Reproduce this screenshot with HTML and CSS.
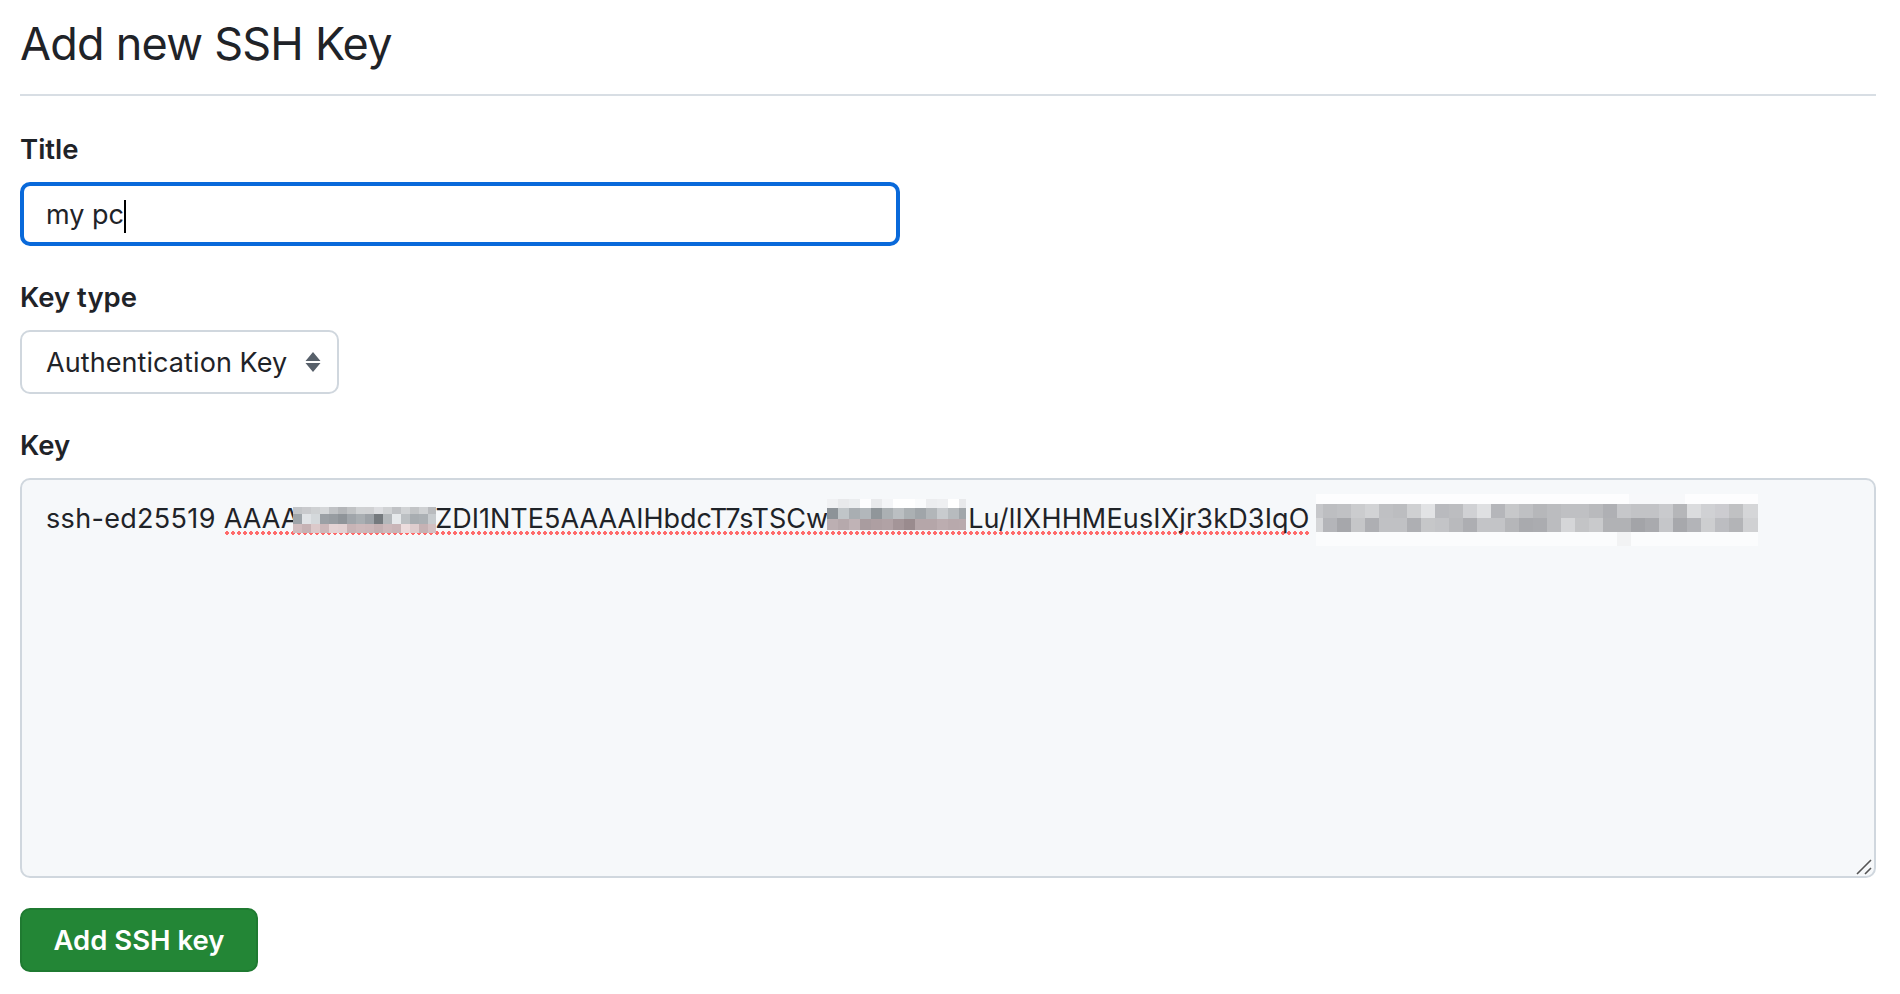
FILE: index.html
```html
<!DOCTYPE html>
<html lang="en">
<head>
  <meta charset="UTF-8" />
  <meta name="viewport" content="width=device-width, initial-scale=1">
  <title>Add new SSH Key</title>
  <link rel="stylesheet" href="styles.css">
</head>
<body>

  <h1>Add new SSH Key</h1>

  <form class="key-form">
    <div class="field">
      <label>Title</label>
      <div class="input focused">my pc<span class="caret"></span></div>
    </div>

    <div class="field">
      <label>Key type</label>
      <div class="select">
        Authentication Key
        <svg class="arrows" width="16" height="20" viewBox="0 0 16 20"><path d="M8 0l7.5 9H.5zM8 20L.5 11h15z"/></svg>
      </div>
    </div>

    <div class="field">
      <label>Key</label>
      <div class="textarea">
        <p class="key-text"><span class="key-prefix">ssh-ed25519 </span><span class="misspelled">AAAA<span class="gap gap-a">C3NzaC1l</span>ZDI1NTE5AAAAIHbdcT7sTSCw<span class="gap gap-b"></span><span class="key-tail">Lu/lIXHHMEusIXjr3kD3IqO</span></span></p>

        <!-- pixelated parts of the key -->
        <svg class="blur blur-a" width="143" height="26" viewBox="0 0 143 26" shape-rendering="crispEdges">
          <g>
            <rect x="0" width="9" height="7" fill="#c3c5c8"/><rect x="9" width="9" height="7" fill="#c9cacd"/><rect x="18" width="9" height="7" fill="#cfd1d3"/><rect x="27" width="9" height="7" fill="#d5d7d9"/><rect x="36" width="9" height="7" fill="#c0c2c5"/><rect x="45" width="9" height="7" fill="#b4b6b9"/><rect x="54" width="9" height="7" fill="#c1c3c5"/><rect x="63" width="9" height="7" fill="#d0d2d4"/><rect x="72" width="9" height="7" fill="#d0d1d3"/><rect x="81" width="9" height="7" fill="#dcdde0"/><rect x="90" width="9" height="7" fill="#d0d2d4"/><rect x="99" width="9" height="7" fill="#c0c2c5"/><rect x="108" width="9" height="7" fill="#d1d3d5"/><rect x="117" width="9" height="7" fill="#c2c4c6"/><rect x="126" width="9" height="7" fill="#cfd1d3"/><rect x="135" width="8" height="7" fill="#b9bbbe"/>
          </g>
          <g transform="translate(0 7)">
            <rect x="0" width="9" height="10" fill="#9ea4a9"/><rect x="9" width="9" height="10" fill="#e0e3e6"/><rect x="18" width="9" height="10" fill="#d4d8db"/><rect x="27" width="9" height="10" fill="#9ba0a5"/><rect x="36" width="9" height="10" fill="#979ca1"/><rect x="45" width="9" height="10" fill="#8f9499"/><rect x="54" width="9" height="10" fill="#a0a5aa"/><rect x="63" width="9" height="10" fill="#a9aeb2"/><rect x="72" width="9" height="10" fill="#9da2a7"/><rect x="81" width="9" height="10" fill="#757a7e"/><rect x="90" width="9" height="10" fill="#b4b8bb"/><rect x="99" width="9" height="10" fill="#e6e9eb"/><rect x="108" width="9" height="10" fill="#bcc0c3"/><rect x="117" width="9" height="10" fill="#a8adb1"/><rect x="126" width="9" height="10" fill="#abb0b4"/><rect x="135" width="8" height="10" fill="#c7cbce"/>
          </g>
          <g transform="translate(0 17)">
            <rect x="0" width="9" height="9" fill="#d0bcbe"/><rect x="9" width="9" height="9" fill="#c6b2b4"/><rect x="18" width="9" height="9" fill="#dcc9ca"/><rect x="27" width="9" height="9" fill="#ccb8ba"/><rect x="36" width="9" height="9" fill="#e4d3d4"/><rect x="45" width="9" height="9" fill="#e2d1d2"/><rect x="54" width="9" height="9" fill="#c8b4b6"/><rect x="63" width="9" height="9" fill="#cdb9bb"/><rect x="72" width="9" height="9" fill="#cbb7b9"/><rect x="81" width="9" height="9" fill="#c4b0b2"/><rect x="90" width="9" height="9" fill="#cdb9bb"/><rect x="99" width="9" height="9" fill="#c9b5b7"/><rect x="108" width="9" height="9" fill="#ecdcdd"/><rect x="117" width="9" height="9" fill="#dfcdce"/><rect x="126" width="9" height="9" fill="#c6b2b4"/><rect x="135" width="8" height="9" fill="#d3c0c2"/>
          </g>
        </svg>

        <svg class="blur blur-b" width="139" height="31" viewBox="0 0 139 31" shape-rendering="crispEdges">
          <g>
            <rect x="0" width="11" height="9" fill="#f0f1f3"/><rect x="11" width="11" height="9" fill="#e8e9eb"/><rect x="22" width="11" height="9" fill="#ebedef"/><rect x="33" width="11" height="9" fill="#fdfdfe"/><rect x="44" width="11" height="9" fill="#e9eaec"/><rect x="55" width="11" height="9" fill="#f4f5f7"/><rect x="66" width="11" height="9" fill="#ffffff"/><rect x="77" width="11" height="9" fill="#ffffff"/><rect x="88" width="11" height="9" fill="#fafbfc"/><rect x="99" width="11" height="9" fill="#ecedef"/><rect x="110" width="11" height="9" fill="#eeeff1"/><rect x="121" width="11" height="9" fill="#ffffff"/><rect x="132" width="7" height="9" fill="#e8e9eb"/>
          </g>
          <g transform="translate(0 9)">
            <rect x="0" width="11" height="11" fill="#8d9398"/><rect x="11" width="11" height="11" fill="#c0c5c8"/><rect x="22" width="11" height="11" fill="#a9aeb2"/><rect x="33" width="11" height="11" fill="#b2b7bb"/><rect x="44" width="11" height="11" fill="#90969a"/><rect x="55" width="11" height="11" fill="#abb0b3"/><rect x="66" width="11" height="11" fill="#bbbfc2"/><rect x="77" width="11" height="11" fill="#abb0b3"/><rect x="88" width="11" height="11" fill="#a0a5a9"/><rect x="99" width="11" height="11" fill="#b2b6b9"/><rect x="110" width="11" height="11" fill="#c8cbce"/><rect x="121" width="11" height="11" fill="#b7bbbe"/><rect x="132" width="7" height="11" fill="#a1a6aa"/>
          </g>
          <g transform="translate(0 20)">
            <rect x="0" width="11" height="11" fill="#bcafb2"/><rect x="11" width="11" height="11" fill="#b6a9ac"/><rect x="22" width="11" height="11" fill="#c0b3b6"/><rect x="33" width="11" height="11" fill="#a99c9f"/><rect x="44" width="11" height="11" fill="#ae9fa2"/><rect x="55" width="11" height="11" fill="#b1a2a5"/><rect x="66" width="11" height="11" fill="#a49598"/><rect x="77" width="11" height="11" fill="#9a8b8e"/><rect x="88" width="11" height="11" fill="#b5a6a9"/><rect x="99" width="11" height="11" fill="#b5a6a9"/><rect x="110" width="11" height="11" fill="#bcadb0"/><rect x="121" width="11" height="11" fill="#b8a9ac"/><rect x="132" width="7" height="11" fill="#b9aaad"/>
          </g>
        </svg>

        <svg class="blur blur-c" width="442" height="52" viewBox="0 0 442 52" shape-rendering="crispEdges">
          <rect width="442" height="10" fill="#fdfdfe"/>
          <rect width="442" height="14" y="38" fill="#fbfcfd"/>
          <rect x="313" width="56" height="10" fill="#f7f8fa"/>
          <rect x="301" y="38" width="14" height="14" fill="#f2f3f4"/>
          <g transform="translate(0 10)">
            <rect x="0" width="7" height="14" fill="#c6c7ca"/><rect x="7" width="14" height="14" fill="#bdbec1"/><rect x="21" width="14" height="14" fill="#c0c1c4"/><rect x="35" width="14" height="14" fill="#cbccce"/><rect x="49" width="14" height="14" fill="#d2d3d5"/><rect x="63" width="14" height="14" fill="#bfc0c3"/><rect x="77" width="14" height="14" fill="#bcbdc0"/><rect x="91" width="14" height="14" fill="#cfd0d2"/><rect x="105" width="14" height="14" fill="#e2e3e5"/><rect x="119" width="14" height="14" fill="#b9babe"/><rect x="133" width="14" height="14" fill="#bcbdc0"/><rect x="147" width="14" height="14" fill="#d0d1d4"/><rect x="161" width="14" height="14" fill="#dfe0e2"/><rect x="175" width="14" height="14" fill="#b5b6ba"/><rect x="189" width="14" height="14" fill="#c7c8ca"/><rect x="203" width="14" height="14" fill="#bfc0c3"/><rect x="217" width="14" height="14" fill="#b6b7ba"/>
            <rect x="231" width="14" height="14" fill="#bbbcbf"/><rect x="245" width="14" height="14" fill="#bfc0c3"/><rect x="259" width="14" height="14" fill="#bfc0c3"/><rect x="273" width="14" height="14" fill="#b9babd"/><rect x="287" width="14" height="14" fill="#afb0b4"/><rect x="301" width="14" height="14" fill="#c6c7ca"/><rect x="315" width="14" height="14" fill="#c2c3c6"/><rect x="329" width="14" height="14" fill="#c2c3c6"/><rect x="343" width="14" height="14" fill="#c9cacd"/><rect x="357" width="14" height="14" fill="#b5b6b9"/><rect x="371" width="14" height="14" fill="#dbdcde"/><rect x="385" width="14" height="14" fill="#d0d1d4"/><rect x="399" width="14" height="14" fill="#ccccd0"/><rect x="413" width="14" height="14" fill="#c0c1c3"/><rect x="427" width="15" height="14" fill="#d5d6d8"/>
          </g>
          <g transform="translate(0 24)">
            <rect x="0" width="7" height="14" fill="#d5d6d8"/><rect x="7" width="14" height="14" fill="#b4b5b9"/><rect x="21" width="14" height="14" fill="#a6a7ab"/><rect x="35" width="14" height="14" fill="#c5c6c8"/><rect x="49" width="14" height="14" fill="#aeafb3"/><rect x="63" width="14" height="14" fill="#c0c1c4"/><rect x="77" width="14" height="14" fill="#c0c1c4"/><rect x="91" width="14" height="14" fill="#aeafb3"/><rect x="105" width="14" height="14" fill="#c6c7c9"/><rect x="119" width="14" height="14" fill="#c3c4c7"/><rect x="133" width="14" height="14" fill="#b9babd"/><rect x="147" width="14" height="14" fill="#adaeb2"/><rect x="161" width="14" height="14" fill="#c3c4c7"/><rect x="175" width="14" height="14" fill="#c3c4c7"/><rect x="189" width="14" height="14" fill="#b5b6b9"/><rect x="203" width="14" height="14" fill="#a9aaae"/><rect x="217" width="14" height="14" fill="#abacb0"/>
            <rect x="231" width="14" height="14" fill="#bbbcbf"/><rect x="245" width="14" height="14" fill="#d5d6d8"/><rect x="259" width="14" height="14" fill="#c3c4c6"/><rect x="273" width="14" height="14" fill="#c9cacc"/><rect x="287" width="14" height="14" fill="#b1b2b5"/><rect x="301" width="14" height="14" fill="#b1b2b5"/><rect x="315" width="14" height="14" fill="#a3a4a8"/><rect x="329" width="14" height="14" fill="#a9aaae"/><rect x="343" width="14" height="14" fill="#c5c6c9"/><rect x="357" width="14" height="14" fill="#a7a8ac"/><rect x="371" width="14" height="14" fill="#b3b4b8"/><rect x="385" width="14" height="14" fill="#cdced0"/><rect x="399" width="14" height="14" fill="#bcbdc1"/><rect x="413" width="14" height="14" fill="#b3b4b7"/><rect x="427" width="15" height="14" fill="#d0d1d3"/>
          </g>
        </svg>

        <svg class="grip" width="16" height="16" viewBox="0 0 16 16"><path d="M1 15L15 1M9 15l6-6" fill="none" stroke="#555" stroke-width="1.6"/></svg>
      </div>
    </div>

    <button type="button" class="btn-primary">Add SSH key</button>
  </form>

</body>
</html>
```

FILE: styles.css
```css
body {
  font-family: Inter, 'Noto Sans', sans-serif;
  font-size: 27px;
  color: #1f2328;
  background: #fff;
  margin: 0;
  padding: 0 24px 0 20px;
}

h1 {
  font-size: 45px;
  font-weight: 400;
  letter-spacing: -0.77px;
  line-height: 56px;
  margin: 0;
  padding: 16px 0 22px;
  border-bottom: 2px solid #d8dee4;
}

.key-form {
  display: flex;
  flex-direction: column;
  align-items: flex-start;
  padding-top: 2px;
}

.field {
  align-self: stretch;
  margin-top: 34px;
}

label {
  display: block;
  font-size: 27.5px;
  font-weight: 600;
  line-height: 34px;
  margin-bottom: 16px;
}

.input {
  box-sizing: border-box;
  width: 880px;
  height: 64px;
  line-height: 58px;
  padding: 0 22px;
  border: 4px solid #0969da;
  border-radius: 10px;
}

.caret {
  display: inline-block;
  width: 2px;
  height: 33px;
  background: #000;
  vertical-align: middle;
}

.select {
  box-sizing: border-box;
  display: inline-flex;
  align-items: center;
  gap: 18px;
  height: 64px;
  padding: 0 16px 0 24px;
  letter-spacing: 0.08px;
  border: 2px solid #d0d7de;
  border-radius: 10px;
}

.arrows {
  fill: #57606a;
}

.textarea {
  position: relative;
  box-sizing: border-box;
  height: 400px;
  padding: 19px 24px;
  background: #f6f8fa;
  border: 2px solid #d0d7de;
  border-radius: 10px;
}

.key-text {
  margin: 0;
  line-height: 40px;
  white-space: nowrap;
}

.key-prefix {
  letter-spacing: 0.32px;
}

.key-tail {
  letter-spacing: 0.16px;
}

/* spell check dots, spaced wider than a dotted underline would be */
.misspelled {
  background: radial-gradient(circle at 3px 2px, #ff6b6b 1.7px, transparent 2.1px) 0 100% / 6px 4px repeat-x;
}

.gap {
  display: inline-block;
}

.gap-a { width: 136px; white-space: nowrap; }
.gap-b { width: 140px; }

.blur {
  position: absolute;
}

.blur-a { left: 271px; top: 27px; }
.blur-b { left: 805px; top: 19px; }
.blur-c { left: 1294px; top: 14px; }

.grip {
  position: absolute;
  right: 2px;
  bottom: 1px;
}

.btn-primary {
  margin-top: 30px;
  width: 238px;
  height: 64px;
  font-family: inherit;
  font-size: 27.5px;
  font-weight: 600;
  color: #fff;
  background: #238636;
  border: 2px solid #1f7a31;
  border-radius: 10px;
}
```
